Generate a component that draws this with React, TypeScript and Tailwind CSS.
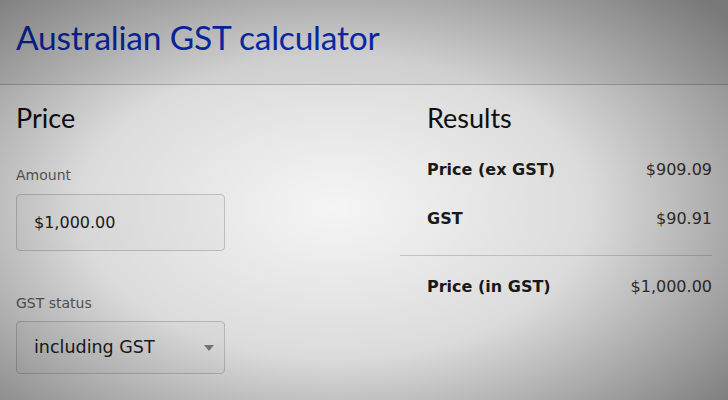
import { useState } from 'react'

const body = { fontFamily: '"DejaVu Sans", "Open Sans", sans-serif' }
const heading = { fontFamily: 'Lato, "Noto Sans", sans-serif' }

function Row({ label, value }: { label: string; value: string }) {
  return (
    <div className="flex items-center justify-between pl-[27px] h-[49px]">
      <span className="font-bold text-[16px] text-[#1b1b1b]">{label}</span>
      <span className="text-[16px] text-[#3a3a3a]">{value}</span>
    </div>
  )
}

export default function App() {
  const [amount, setAmount] = useState('$1,000.00')
  const [status, setStatus] = useState('incl')

  return (
    <div className="relative w-[728px] h-[400px] overflow-hidden bg-white" style={body}>
      <header className="h-[85px] bg-[#f2f2f2] border-b border-[#c4c4c4] px-4 pt-[16px]">
        <h1 className="text-[33.5px] leading-[42px] text-[#0b2fc8] tracking-[-0.2px]" style={heading}>
          Australian GST calculator
        </h1>
      </header>

      <main className="flex px-4 pt-[17px]">
        <section className="w-[384px]">
          <h2 className="text-[27px] leading-8 text-[#111]" style={heading}>Price</h2>

          <label className="block mt-[31px] text-[14px] leading-5 text-[#666]">Amount</label>
          <input
            className="mt-[9px] block w-[209px] h-[57px] rounded border border-[#d0d0d0] bg-[#fafafa] px-[17px] text-[16px] text-[#222] outline-none"
            value={amount}
            onChange={e => setAmount(e.target.value)}
          />

          <label className="block mt-[42px] text-[14px] leading-5 text-[#666]">GST status</label>
          <div className="relative mt-[8px] w-[209px]">
            <select
              className="appearance-none block w-full h-[53px] rounded border border-[#d0d0d0] bg-[#fafafa] pl-[17px] text-[17.5px] text-[#222] outline-none"
              value={status}
              onChange={e => setStatus(e.target.value)}
            >
              <option value="incl">including GST</option>
              <option value="excl">excluding GST</option>
            </select>
            <span className="pointer-events-none absolute right-[11px] top-[24px] w-0 h-0 border-l-[5px] border-r-[5px] border-t-[6px] border-l-transparent border-r-transparent border-t-[#888]" />
          </div>
        </section>

        <section className="flex-1">
          <h2 className="pl-[27px] text-[27px] leading-8 text-[#111]" style={heading}>Results</h2>
          <div className="mt-[11px]">
            <Row label="Price (ex GST)" value="$909.09" />
            <Row label="GST" value="$90.91" />
          </div>
          <div className="border-t border-[#d6d6d6] mt-[12px] pt-[6px]">
            <Row label="Price (in GST)" value="$1,000.00" />
          </div>
        </section>
      </main>

      {/* screenshot vignette */}
      <div className="pointer-events-none absolute inset-0 bg-[radial-gradient(ellipse_70%_75%_at_46%_52%,rgba(0,0,0,0.04)_0%,rgba(0,0,0,0.14)_50%,rgba(0,0,0,0.5)_100%)]" />
    </div>
  )
}
